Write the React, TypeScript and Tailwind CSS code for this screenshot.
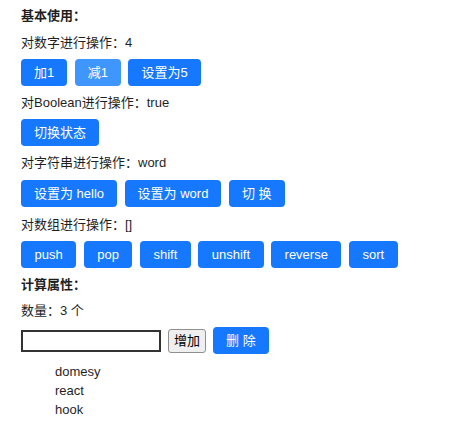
import React from "react";

const font = { fontFamily: '"Liberation Sans", "Noto Sans CJK SC", sans-serif' };

function Btn({ children, light, wide }: { children: React.ReactNode; light?: boolean; wide?: boolean }) {
  const base = "h-[27px] rounded-[4px] text-white text-[13px] leading-none ";
  const pad = wide ? "px-[13.5px] " : "px-[13px] ";
  return <button className={base + pad + (light ? "bg-[#4096ff]" : "bg-[#1677ff]")}>{children}</button>;
}

export default function App() {
  return (
    <div className="w-[474px] h-[435px] bg-white text-[#1f1f1f] text-[13px] px-[21px]" style={font}>
      <div className="pt-[6px] h-[26px] leading-[20px] font-bold">基本使用：</div>
      <div className="mt-[7px] leading-[20px]">对数字进行操作：4</div>
      <div className="mt-[6px] flex gap-[7.5px]">
        <Btn>加1</Btn>
        <Btn light>减1</Btn>
        <Btn>设置为5</Btn>
      </div>
      <div className="mt-[7px] leading-[20px]">对Boolean进行操作：true</div>
      <div className="mt-[6px] flex gap-[7.5px]">
        <Btn>切换状态</Btn>
      </div>
      <div className="mt-[7px] leading-[20px]">对字符串进行操作：word</div>
      <div className="mt-[7px] flex gap-[7.5px]">
        <Btn>设置为 hello</Btn>
        <Btn>设置为 word</Btn>
        <Btn>切 换</Btn>
      </div>
      <div className="mt-[8px] leading-[20px]">对数组进行操作：[]</div>
      <div className="mt-[6px] flex gap-[7.5px]">
        <Btn wide>push</Btn>
        <Btn wide>pop</Btn>
        <Btn wide>shift</Btn>
        <Btn wide>unshift</Btn>
        <Btn wide>reverse</Btn>
        <Btn wide>sort</Btn>
      </div>
      <div className="mt-[7px] leading-[20px] font-bold">计算属性：</div>
      <div className="mt-[6px] leading-[20px]">数量：3 个</div>
      <div className="mt-[6px] flex items-center gap-[7px]">
        <input className="w-[140px] h-[22px] border-2 border-[#333] bg-white outline-none" />
        <button className="h-[24px] px-[5px] rounded-[3px] border border-[#8f8f8f] bg-[#efefef] text-[13px] leading-none text-black">
          增加
        </button>
        <Btn>删 除</Btn>
      </div>
      <ul className="mt-[8px] pl-[34px]">
        <li className="leading-[19px]">domesy</li>
        <li className="leading-[19px]">react</li>
        <li className="leading-[19px]">hook</li>
      </ul>
    </div>
  );
}
